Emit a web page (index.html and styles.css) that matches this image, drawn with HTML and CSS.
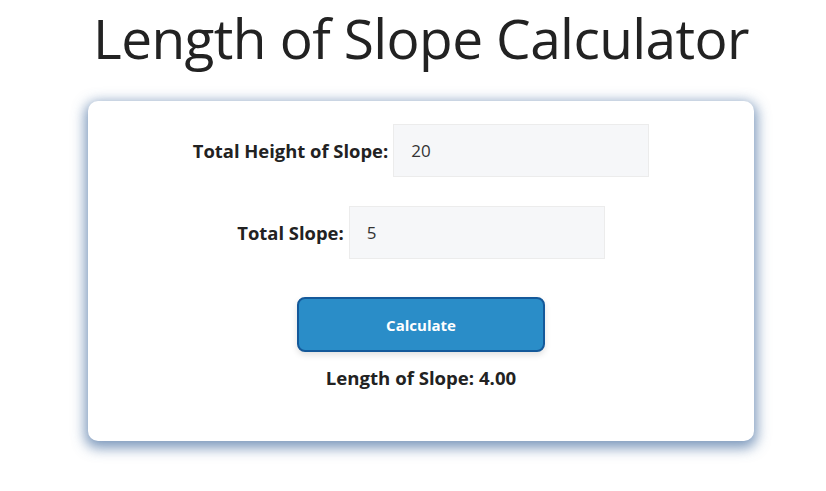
FILE: index.html
```html
<!DOCTYPE html>
<html>
<head>
<meta charset="utf-8">
<link rel="stylesheet" href="styles.css">
</head>
<body>
<h1 class="title">Length of Slope Calculator</h1>
<div class="card">
  <div class="row">
    <label class="label">Total Height of Slope:</label>
    <input class="field" type="text" value="20">
  </div>
  <div class="row">
    <label class="label">Total Slope:</label>
    <input class="field" type="text" value="5">
  </div>
  <button class="btn">Calculate</button>
  <div class="result">Length of Slope: 4.00</div>
</div>
</body>
</html>
```
FILE: styles.css
```css
html, body { background: #ffffff; }
body {
  margin: 0 0 0 16px;
  min-height: 491px;
  font-family: "Open Sans", "Noto Sans", sans-serif;
  color: #222222;
  display: flex;
  flex-direction: column;
  align-items: center;
}
.title {
  margin: 0;
  font-weight: 400;
  font-size: 55px;
  line-height: 75px;
  letter-spacing: -0.6px;
  color: #222222;
}
.card {
  margin-top: 26px;
  width: 666px;
  height: 340px;
  box-sizing: border-box;
  background: #fff;
  border-radius: 10px;
  box-shadow: 0 4px 13px 3px rgba(70, 110, 160, 0.7);
  display: flex;
  flex-direction: column;
  align-items: center;
  padding-top: 23px;
}
.row {
  display: flex;
  align-items: center;
  gap: 5px;
  margin-bottom: 29px;
}
.label {
  font-weight: 700;
  font-size: 18.4px;
  color: #222;
}
.field {
  width: 256px;
  height: 53px;
  box-sizing: border-box;
  border: 1px solid #ececec;
  background: #f6f7f9;
  padding: 0 0 0 17px;
  font-family: "Open Sans", sans-serif;
  font-size: 17px;
  color: #333;
  outline: none;
}
.btn {
  margin-top: 9px;
  width: 248px;
  height: 55px;
  background: #2a8dc8;
  border: 2px solid #14599a;
  border-radius: 8px;
  color: #fff;
  font-family: "Open Sans", sans-serif;
  font-weight: 700;
  font-size: 15px;
  box-shadow: 0 3px 6px rgba(0,0,0,0.12);
}
.result {
  margin-top: 13px;
  font-weight: 700;
  font-size: 18.6px;
  color: #222;
}
```
